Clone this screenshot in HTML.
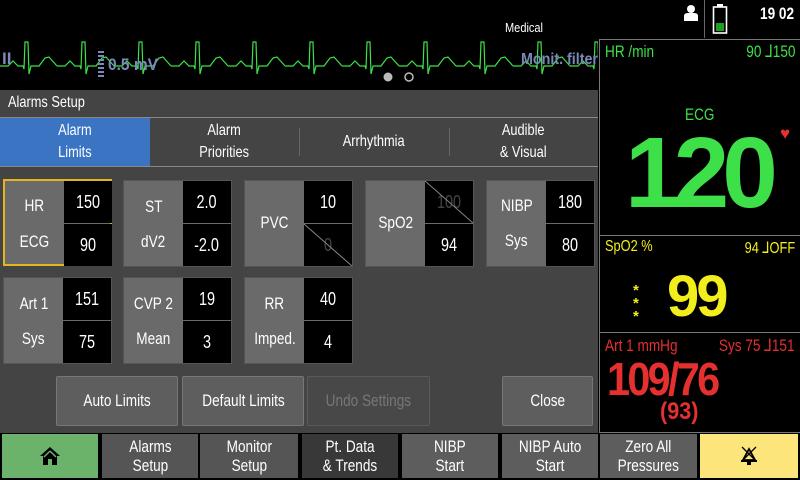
<!DOCTYPE html>
<html><head><meta charset="utf-8"><style>
*{box-sizing:border-box;margin:0;padding:0}
body{width:800px;height:480px;background:#000;position:relative;overflow:hidden;font-family:"Liberation Sans",sans-serif;color:#fff}
.a{position:absolute;white-space:nowrap}
.n{display:inline-block;transform:scaleX(.8);transform-origin:center;white-space:nowrap}
.nl{transform:scaleX(.8);transform-origin:left center}
.nr{transform:scaleX(.8);transform-origin:right center}
.c{display:flex;align-items:center;justify-content:center;text-align:center}
.card{position:absolute;width:109px;height:87px;background:#6a6a6a;border:1px solid #555}
.card .l{position:absolute;left:0;top:0;width:59px;height:100%;font-size:17px}
.card .l div{position:absolute;left:0;width:100%;text-align:center}
.card .v{position:absolute;left:59px;width:48px;height:42px;background:#000;font-size:18px}
.card .v1{top:0}
.card .v2{top:43px}
.btn{position:absolute;top:376px;height:50px;background:#5e5e5e;border:1px solid #777;border-radius:2px;font-size:17px}
.bb{position:absolute;top:434px;height:44px;font-size:17px;line-height:19px}
.sep{position:absolute;top:128px;width:1px;height:28px;background:#666}
</style></head><body>
<svg class="a" style="left:0;top:0" width="600" height="90">
<defs><pattern id="ecg" x="0" y="0" width="57" height="90" patternUnits="userSpaceOnUse">
<polyline fill="none" stroke="#3ee04a" stroke-width="1.2" points="0,66 8,66 13,61 18,66 23,66 24,69 25,42 28,42 29,74 31,66 39,66 45,58 49,57 57,66"/>
</pattern></defs>
<rect x="0" y="30" width="598" height="50" fill="url(#ecg)"/>
<g fill="#7a8ab8"><rect x="98" y="51" width="6" height="2"/><rect x="98" y="55" width="6" height="2"/><rect x="98" y="59" width="6" height="2"/><rect x="98" y="63" width="6" height="2"/><rect x="98" y="67" width="6" height="2"/><rect x="98" y="71" width="6" height="2"/><rect x="98" y="75" width="6" height="2"/></g>
<text x="2" y="64" fill="#7a8ab8" font-size="17" font-weight="bold" font-family="Liberation Sans,sans-serif">II</text>
<text x="108" y="70" fill="#7a8ab8" font-size="17" font-weight="bold" font-family="Liberation Sans,sans-serif" textLength="50" lengthAdjust="spacingAndGlyphs">0.5 mV</text>
<text x="521" y="64" fill="#7a8ab8" font-size="16" font-weight="bold" font-family="Liberation Sans,sans-serif" textLength="77" lengthAdjust="spacingAndGlyphs">Monit. filter</text>
<text x="505" y="32" fill="#fff" font-size="13" font-family="Liberation Sans,sans-serif" textLength="38" lengthAdjust="spacingAndGlyphs">Medical</text>
<circle cx="388" cy="77" r="4.5" fill="#bbb"/><circle cx="409" cy="77" r="4" fill="none" stroke="#bbb" stroke-width="1.5"/>
</svg>
<svg class="a" style="left:682px;top:4px" width="18" height="18"><circle cx="9" cy="5" r="4" fill="#fff"/><path d="M2 17 V12 Q2 9 6 9 H12 Q16 9 16 12 V17Z" fill="#fff"/></svg>
<div class="a" style="left:704px;top:0;width:1px;height:38px;background:#666"></div>
<svg class="a" style="left:712px;top:4px" width="16" height="30"><rect x="5" y="0" width="6" height="3" fill="#fff"/><rect x="1.5" y="3" width="13" height="26" fill="none" stroke="#fff" stroke-width="1.6"/><rect x="4" y="19" width="8" height="8" fill="#1fa020"/></svg>
<div class="a nl" style="left:760px;top:4px;font-size:17px;font-weight:bold">19 02</div>
<div class="a" style="left:0;top:90px;width:598px;height:343px;background:#444"></div>
<div class="a nl" style="left:8px;top:94px;font-size:16px">Alarms Setup</div>
<div class="a" style="left:0;top:117px;width:598px;height:1px;background:#888"></div>
<div class="a c" style="left:0;top:118px;width:150px;height:48px;background:#3a74c2;font-size:16px;line-height:22px"><span class="n">Alarm<br>Limits</span></div>
<div class="a c" style="left:150px;top:118px;width:149px;height:48px;font-size:16px;line-height:22px"><span class="n">Alarm<br>Priorities</span></div>
<div class="a c" style="left:299px;top:118px;width:150px;height:48px;font-size:16px"><span class="n">Arrhythmia</span></div>
<div class="a c" style="left:449px;top:118px;width:149px;height:48px;font-size:16px;line-height:22px"><span class="n">Audible<br>&amp; Visual</span></div>
<div class="sep" style="left:299px"></div><div class="sep" style="left:449px"></div>
<div class="a" style="left:0;top:166px;width:598px;height:1px;background:#888"></div>
<div class="card" style="left:3px;top:179px;border:2px solid #e3b81c;width:109px"><div class="l"><div style="top:15px"><span class="n">HR</span></div><div style="top:51px"><span class="n">ECG</span></div></div><div class="v c v1"><span class="n">150</span></div><div class="v c v2"><span class="n">90</span></div></div>
<div class="card" style="left:123px;top:180px"><div class="l"><div style="top:16px"><span class="n">ST</span></div><div style="top:51px"><span class="n">dV2</span></div></div><div class="v c v1"><span class="n">2.0</span></div><div class="v c v2"><span class="n">-2.0</span></div></div>
<div class="card" style="left:244px;top:180px"><div class="l"><div style="top:32px"><span class="n">PVC</span></div></div><div class="v c v1"><span class="n">10</span></div><div class="v c v2" style="color:#444"><span class="n">0</span><svg class="a" style="left:0;top:0" width="48" height="42"><line x1="0" y1="0" x2="48" y2="42" stroke="#888" stroke-width="1"/></svg></div></div>
<div class="card" style="left:365px;top:180px"><div class="l"><div style="top:32px"><span class="n">SpO2</span></div></div><div class="v c v1" style="color:#444"><span class="n">100</span><svg class="a" style="left:0;top:0" width="48" height="42"><line x1="0" y1="0" x2="48" y2="42" stroke="#888" stroke-width="1"/></svg></div><div class="v c v2"><span class="n">94</span></div></div>
<div class="card" style="left:486px;top:180px"><div class="l"><div style="top:15px"><span class="n">NIBP</span></div><div style="top:50px"><span class="n">Sys</span></div></div><div class="v c v1"><span class="n">180</span></div><div class="v c v2"><span class="n">80</span></div></div>
<div class="card" style="left:3px;top:277px"><div class="l"><div style="top:16px"><span class="n">Art 1</span></div><div style="top:51px"><span class="n">Sys</span></div></div><div class="v c v1"><span class="n">151</span></div><div class="v c v2"><span class="n">75</span></div></div>
<div class="card" style="left:123px;top:277px"><div class="l"><div style="top:16px"><span class="n">CVP 2</span></div><div style="top:51px"><span class="n">Mean</span></div></div><div class="v c v1"><span class="n">19</span></div><div class="v c v2"><span class="n">3</span></div></div>
<div class="card" style="left:244px;top:277px"><div class="l"><div style="top:16px"><span class="n">RR</span></div><div style="top:51px"><span class="n">Imped.</span></div></div><div class="v c v1"><span class="n">40</span></div><div class="v c v2"><span class="n">4</span></div></div>
<div class="btn c" style="left:56px;width:122px"><span class="n">Auto Limits</span></div>
<div class="btn c" style="left:182px;width:122px"><span class="n">Default Limits</span></div>
<div class="btn c" style="left:307px;width:123px;background:#484848;border-color:#5a5a5a;color:#777"><span class="n">Undo Settings</span></div>
<div class="btn c" style="left:502px;width:91px"><span class="n">Close</span></div>
<div class="a" style="left:599px;top:39px;width:201px;height:197px;border:1px solid #777;border-right:none"></div>
<div class="a nl" style="left:605px;top:42px;color:#3ee04a;font-size:17px">HR /min</div>
<div class="a nr" style="right:5px;top:42px;color:#3ee04a;font-size:17px">90 ⅃150</div>
<div class="a nl" style="left:685px;top:105px;color:#3ee04a;font-size:17px">ECG</div>
<div class="a" style="left:625px;top:118px;color:#3ee04a;font-size:100px;font-weight:bold;letter-spacing:-7px;line-height:110px">120</div>
<div class="a" style="left:780px;top:124px;color:#e53030;font-size:17px">♥</div>
<div class="a" style="left:599px;top:235px;width:201px;height:98px;border:1px solid #777;border-right:none"></div>
<div class="a nl" style="left:605px;top:238px;color:#f2ee1e;font-size:16px">SpO2 %</div>
<div class="a nr" style="right:5px;top:238px;color:#f2ee1e;font-size:16px">94 ⅃OFF</div>
<div class="a" style="left:633px;top:284px;color:#f2ee1e;font-size:15px;line-height:13px;font-weight:bold">*<br>*<br>*</div>
<div class="a" style="left:667px;top:266px;color:#f2ee1e;font-size:58px;font-weight:bold;line-height:62px;letter-spacing:-3px">99</div>
<div class="a" style="left:599px;top:332px;width:201px;height:101px;border:1px solid #777;border-right:none"></div>
<div class="a nl" style="left:605px;top:336px;color:#e53030;font-size:17px">Art 1 mmHg</div>
<div class="a nr" style="right:5px;top:336px;color:#e53030;font-size:17px">Sys 75 ⅃151</div>
<div class="a" style="left:607px;top:354px;color:#e53030;font-size:46px;font-weight:bold;line-height:50px;letter-spacing:-3px;transform:scaleX(.9);transform-origin:left">109/76</div>
<div class="a" style="left:660px;top:399px;color:#e53030;font-size:24px;font-weight:bold;line-height:26px;transform:scaleX(.9);transform-origin:left">(93)</div>
<div class="bb c" style="left:2px;width:96px;background:#6bb36a"><svg width="22" height="20"><path d="M11 1 L21 10 L18 10 L18 19 L13 19 L13 13 L9 13 L9 19 L4 19 L4 10 L1 10Z" fill="#000"/><path d="M11 5 L17 11 M11 5 L5 11" stroke="#6bb36a" stroke-width="1.5"/></svg></div>
<div class="bb c" style="left:102px;width:96px;background:#555"><span class="n">Alarms<br>Setup</span></div>
<div class="bb c" style="left:200px;width:98px;background:#555"><span class="n">Monitor<br>Setup</span></div>
<div class="bb c" style="left:302px;width:96px;background:#383838"><span class="n">Pt. Data<br>&amp; Trends</span></div>
<div class="bb c" style="left:402px;width:96px;background:#5d5d5d"><span class="n">NIBP<br>Start</span></div>
<div class="bb c" style="left:502px;width:96px;background:#5d5d5d"><span class="n">NIBP Auto<br>Start</span></div>
<div class="bb c" style="left:600px;width:97px;background:#5d5d5d"><span class="n">Zero All<br>Pressures</span></div>
<div class="bb c" style="left:700px;width:98px;background:#fce57a"><svg width="22" height="22"><path d="M11 4 L5 15 L17 15Z" fill="none" stroke="#000" stroke-width="1.8"/><path d="M3 16 H19" stroke="#000" stroke-width="2"/><rect x="9" y="17" width="4" height="3" fill="#000"/><path d="M4 2 L18 16 M18 2 L4 16" stroke="#000" stroke-width="1.3"/></svg></div>
</body></html>
